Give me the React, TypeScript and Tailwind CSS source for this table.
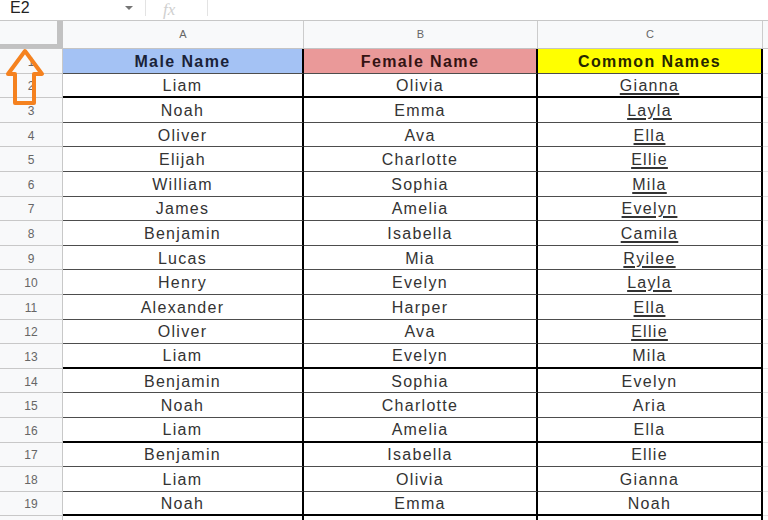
import React from "react";

type R = { n: number | string; a: string; b: string; c: string; u?: boolean; thick?: boolean };

const rows: R[] = [
  { n: 2, a: "Liam", b: "Olivia", c: "Gianna", u: true, thick: true },
  { n: 3, a: "Noah", b: "Emma", c: "Layla", u: true },
  { n: 4, a: "Oliver", b: "Ava", c: "Ella", u: true },
  { n: 5, a: "Elijah", b: "Charlotte", c: "Ellie", u: true },
  { n: 6, a: "William", b: "Sophia", c: "Mila", u: true },
  { n: 7, a: "James", b: "Amelia", c: "Evelyn", u: true },
  { n: 8, a: "Benjamin", b: "Isabella", c: "Camila", u: true },
  { n: 9, a: "Lucas", b: "Mia", c: "Ryilee", u: true },
  { n: 10, a: "Henry", b: "Evelyn", c: "Layla", u: true },
  { n: 11, a: "Alexander", b: "Harper", c: "Ella", u: true },
  { n: 12, a: "Oliver", b: "Ava", c: "Ellie", u: true },
  { n: 13, a: "Liam", b: "Evelyn", c: "Mila", thick: true },
  { n: 14, a: "Benjamin", b: "Sophia", c: "Evelyn" },
  { n: 15, a: "Noah", b: "Charlotte", c: "Aria" },
  { n: 16, a: "Liam", b: "Amelia", c: "Ella", thick: true },
  { n: 17, a: "Benjamin", b: "Isabella", c: "Ellie" },
  { n: 18, a: "Liam", b: "Olivia", c: "Gianna" },
  { n: 19, a: "Noah", b: "Emma", c: "Noah", thick: true },
  { n: "", a: "", b: "", c: "" },
];

function Row({ r }: { r: R }) {
  const bottom = r.thick ? "border-b-2 border-b-black" : "border-b border-b-[#4d4d4d]";
  const cell =
    "h-full pt-[2px] flex items-center justify-center shrink-0 text-[16px] tracking-[1.3px] text-[#333333] " + bottom;
  return (
    <div className="flex h-[24.6px]">
      <div className="w-[63px] shrink-0 h-full pt-[2px] bg-[#f8f9fa] border-r border-b border-[#c8c8c8] flex items-center justify-center text-[12px] text-[#666666]">
        {r.n}
      </div>
      <div className={"w-[241px] border-r-2 border-r-black " + cell}>{r.a}</div>
      <div className={"w-[234px] border-r-2 border-r-black " + cell}>{r.b}</div>
      <div className={"w-[225px] border-r-2 border-r-black " + cell}>
        <span className={r.u ? "underline decoration-[1.5px] underline-offset-[2px]" : ""}>{r.c}</span>
      </div>
      <div className="flex-1 h-full border-b border-[#e2e2e2]" />
    </div>
  );
}

export default function App() {
  return (
    <div className="relative w-[768px] h-[520px] overflow-hidden bg-white font-['Liberation_Sans',Arial,sans-serif]">
      {/* formula bar */}
      <div className="h-[21px] flex items-start border-b border-[#c7c7c7]">
        <div className="w-[145px] flex justify-between pl-[10px] pr-[12px]">
          <span className="text-[16px] leading-4 text-[#222222]">E2</span>
          <svg width="8" height="5" viewBox="0 0 8 5" className="mt-[6px]">
            <path d="M0 0 L8 0 L4 4 Z" fill="#757575" />
          </svg>
        </div>
        <div className="w-px h-[16px] bg-[#e3e3e3]" />
        <div className="w-[61px] pl-[17px] h-[19px]">
          <span className="block font-['Liberation_Serif',serif] italic text-[17px] leading-[19px] text-[#cfcfcf]">
            fx
          </span>
        </div>
        <div className="w-px h-[16px] bg-[#e3e3e3]" />
      </div>

      {/* column headers */}
      <div className="flex h-[28px] bg-[#f8f9fa] border-b border-[#c4c4c4]">
        <div className="w-[63px] shrink-0 h-full border-r-[6px] border-b-[4px] border-[#c2c2c2]" />
        <div className="w-[241px] shrink-0 h-full border-r border-[#cccccc] flex items-center justify-center text-[11px] text-[#666666]">
          A
        </div>
        <div className="w-[234px] shrink-0 h-full border-r border-[#cccccc] flex items-center justify-center text-[11px] text-[#666666]">
          B
        </div>
        <div className="w-[225px] shrink-0 h-full border-r border-[#cccccc] flex items-center justify-center text-[11px] text-[#666666]">
          C
        </div>
        <div className="flex-1" />
      </div>

      {/* header row 1 */}
      <div className="flex h-[24.6px]">
        <div className="w-[63px] shrink-0 h-full pt-[2px] bg-[#f8f9fa] border-r border-b border-[#c8c8c8] flex items-center justify-center text-[12px] text-[#666666]">
          1
        </div>
        <div className="w-[241px] shrink-0 h-full pt-[2px] bg-[#a4c2f4] border-r-2 border-r-black border-b border-b-[#4d4d4d] flex items-center justify-center text-[16px] tracking-[1.4px] font-bold text-[#1a2238]">
          Male Name
        </div>
        <div className="w-[234px] shrink-0 h-full pt-[2px] bg-[#ea9999] border-r-2 border-r-black border-b border-b-[#4d4d4d] flex items-center justify-center text-[16px] tracking-[1.4px] font-bold text-[#341313]">
          Female Name
        </div>
        <div className="w-[225px] shrink-0 h-full pt-[2px] bg-[#ffff00] border-r-2 border-r-black border-b border-b-[#4d4d4d] flex items-center justify-center text-[16px] tracking-[1.4px] font-bold text-[#262600]">
          Common Names
        </div>
        <div className="flex-1 h-full border-b border-[#e2e2e2]" />
      </div>

      {rows.map((r, i) => (
        <Row key={i} r={r} />
      ))}

      {/* orange annotation arrow */}
      <svg
        className="absolute left-0 top-0 pointer-events-none"
        width="64"
        height="110"
        viewBox="0 0 64 110"
      >
        <polygon
          points="25,51 42,74 34,74 34,103 15,103 15,74 8,74"
          fill="none"
          stroke="#f5821f"
          strokeWidth="4"
          strokeLinejoin="round"
        />
      </svg>
    </div>
  );
}
